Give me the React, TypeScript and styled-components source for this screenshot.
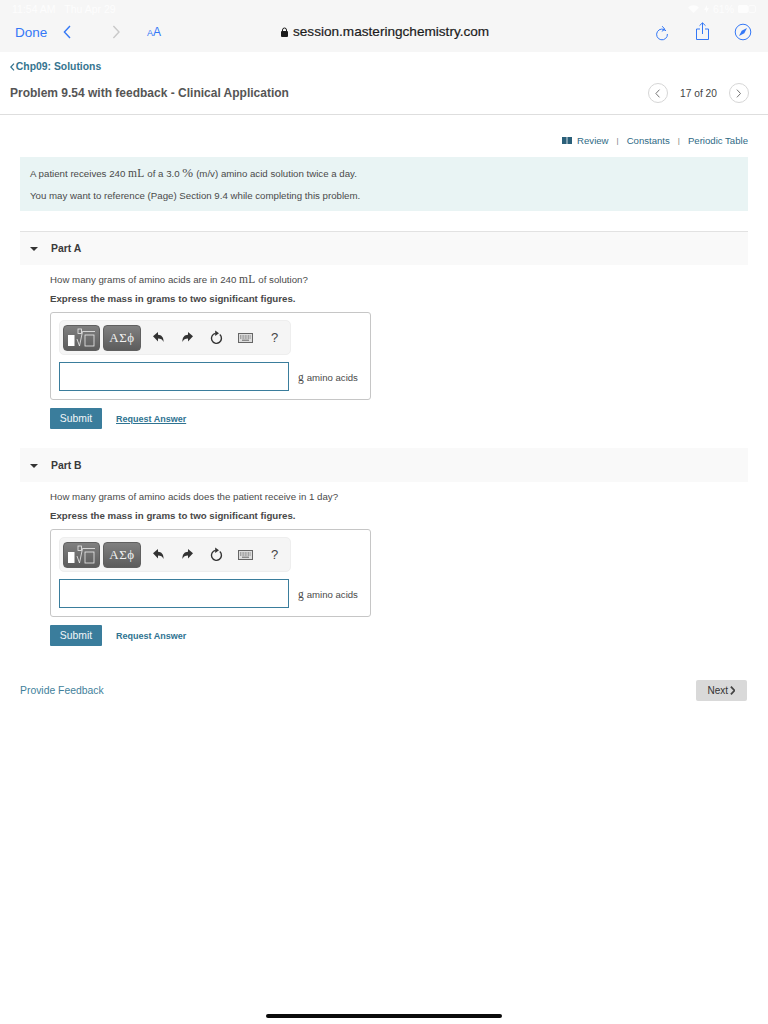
import styled, { createGlobalStyle } from "styled-components";

const Global = createGlobalStyle`
  html, body { margin: 0; padding: 0; background: #fff; }
  body { font-family: "Liberation Sans", Arial, sans-serif; color: #333; }
`;

const Page = styled.div`
  width: 768px;
  height: 1024px;
  position: relative;
  overflow: hidden;
  background: #fff;
`;

const BrowserBar = styled.header`
  height: 52px;
  background: #f6f6f6;
  position: relative;
  box-sizing: border-box;
  padding: 0 16px 0 15px;
`;

const StatusLeft = styled.div`
  position: absolute;
  left: 12px;
  top: 3px;
  font-size: 10.5px;
  line-height: 12px;
  color: #fdfdfd;
`;

const StatusRight = styled.div`
  position: absolute;
  right: 11px;
  top: 3px;
  display: flex;
  align-items: center;
  gap: 4px;
  font-size: 10.5px;
  line-height: 12px;
  color: #fdfdfd;
`;

const BrowserRow = styled.div`
  height: 52px;
  padding-top: 12px;
  box-sizing: border-box;
  display: flex;
  align-items: center;
  color: #3478f6;
`;

const DoneText = styled.span`
  font-size: 13.5px;
  width: 48px;
`;

const NavSlot = styled.span`
  display: flex;
  width: ${(p: { $w: number }) => p.$w}px;
`;

const TextSize = styled.span`
  font-size: 12px;
  width: 100px;
  & small { font-size: 9px; }
`;

const Address = styled.div`
  position: absolute;
  left: 281px;
  top: 24px;
  display: flex;
  align-items: center;
  gap: 5px;
  font-size: 13.6px;
  color: #1c1c1c;
  -webkit-text-stroke: 0.2px #1c1c1c;
`;

const BrowserTools = styled.div`
  position: absolute;
  left: 656px;
  top: 22px;
  display: flex;
  align-items: center;
  gap: 24px;
`;

const TitleArea = styled.div`
  height: 63px;
  box-sizing: border-box;
  border-bottom: 1px solid #dedede;
  padding: 9px 19px 0 10px;
`;

const Crumb = styled.a`
  display: flex;
  align-items: center;
  gap: 1px;
  font-size: 10.4px;
  font-weight: 700;
  color: #35748f;
  line-height: 11px;
`;

const TitleRow = styled.div`
  display: flex;
  align-items: center;
  justify-content: space-between;
  margin-top: 10px;
  height: 22px;
`;

const Title = styled.h1`
  margin: 0;
  font-size: 12px;
  font-weight: 700;
  color: #555;
`;

const Pager = styled.div`
  display: flex;
  align-items: center;
  font-size: 10.2px;
  color: #444;
`;

const PagerButton = styled.span`
  width: 20px;
  height: 20px;
  box-sizing: border-box;
  border: 1px solid #d6d6d6;
  border-radius: 50%;
  display: flex;
  align-items: center;
  justify-content: center;
`;

const PagerText = styled.span`
  width: 61px;
  text-align: center;
`;

const Content = styled.main`
  padding: 0 20px;
`;

const Links = styled.div`
  display: flex;
  justify-content: flex-end;
  align-items: center;
  height: 42px;
  box-sizing: border-box;
  padding-top: 8px;
  font-size: 9.6px;
  color: #2f6a85;
`;

const Separator = styled.span`
  margin: 0 8px;
  color: #777;
  font-size: 8px;
`;

const Intro = styled.section`
  height: 54px;
  box-sizing: border-box;
  background: #e9f4f4;
  padding: 10px 10px 0;
  font-size: 9.7px;
  color: #4a4a4a;
`;

const IntroLine = styled.p`
  margin: 0 0 11px;
  line-height: 11px;
`;

const Unit = styled.span`
  font-family: "Liberation Serif", "Times New Roman", serif;
  font-size: 11.5px;
  letter-spacing: 0.3px;
`;

const Percent = styled(Unit)`
  font-size: 13px;
  line-height: 11px;
`;

const PartHeader = styled.div`
  margin-top: ${(p: { $top: number }) => p.$top}px;
  height: 34px;
  box-sizing: border-box;
  background: #f9f9f9;
  display: flex;
  align-items: center;
  padding-left: 10px;
  font-size: 10.4px;
  font-weight: 700;
  color: #3a3a3a;
`;

const PartHeaderTop = styled(PartHeader)`
  border-top: 1px solid #e2e2e2;
`;

const Caret = styled.span`
  width: 0;
  height: 0;
  border-left: 4px solid transparent;
  border-right: 4px solid transparent;
  border-top: 4px solid #333;
  margin-right: 13px;
  margin-top: 1px;
`;

const PartBody = styled.div`
  padding: 8px 0 0 30px;
`;

const Question = styled.p`
  margin: 0;
  font-size: 9.7px;
  line-height: 11px;
  padding-top: 1px;
  color: #4a4a4a;
`;

const Instruction = styled.p`
  margin: 8px 0 0;
  font-size: 9.7px;
  line-height: 11px;
  font-weight: 700;
  color: #484848;
`;

const AnswerBox = styled.div`
  margin-top: 8px;
  width: 321px;
  height: 88px;
  box-sizing: border-box;
  border: 1px solid #c6c6c6;
  border-radius: 3px;
  padding: 7px 8px 0;
`;

const Toolbar = styled.div`
  width: 232px;
  height: 35px;
  box-sizing: border-box;
  background: #f5f5f5;
  border: 1px solid #eeeeee;
  border-radius: 5px;
  display: flex;
  align-items: center;
  padding-left: 3px;
`;

const MathButton = styled.span`
  width: ${(p: { $w: number }) => p.$w}px;
  height: 26px;
  box-sizing: border-box;
  margin-right: 3px;
  border-radius: 4px;
  border: 1px solid #606060;
  background: linear-gradient(#808080, #5c5c5c);
  color: #f2f2f2;
  font-family: "Liberation Serif", serif;
  font-size: 13px;
  letter-spacing: 0.5px;
  display: flex;
  align-items: center;
  justify-content: center;
`;

const ToolIcon = styled.span`
  width: 29px;
  display: flex;
  justify-content: center;
  align-items: center;
  color: #444;
  font-size: 13px;
`;

const AnswerRow = styled.div`
  display: flex;
  align-items: center;
  margin-top: 7px;
`;

const AnswerInput = styled.input`
  width: 230px;
  height: 29px;
  box-sizing: border-box;
  border: 1px solid #3a7d9c;
  border-radius: 0;
  padding: 0;
  outline: none;
  background: #fff;
`;

const AnswerUnit = styled.span`
  margin-left: 9px;
  font-size: 9.6px;
  color: #4a4a4a;
`;

const Actions = styled.div`
  display: flex;
  align-items: center;
  margin-top: 8px;
`;

const SubmitButton = styled.button`
  width: 52px;
  height: 21px;
  border: 0;
  border-radius: 1px;
  padding: 0;
  background: #3a7d9c;
  color: #f1f6f8;
  font: 10.4px "Liberation Sans", Arial, sans-serif;
`;

const RequestLink = styled.a`
  margin-left: 14px;
  font-size: 9px;
  font-weight: 700;
  color: #2f7391;
  text-decoration: ${(p: { $line: boolean }) => (p.$line ? "underline" : "none")};
`;

const Footer = styled.footer`
  margin-top: 34px;
  display: flex;
  justify-content: space-between;
  align-items: center;
  padding-right: 1px;
`;

const FeedbackLink = styled.a`
  font-size: 10.4px;
  color: #3f7f9b;
`;

const NextButton = styled.span`
  width: 51px;
  height: 21px;
  border-radius: 2px;
  background: #d9d9d9;
  color: #333;
  font-size: 10px;
  display: flex;
  align-items: center;
  justify-content: center;
  gap: 2px;
`;

const HomeIndicator = styled.div`
  position: absolute;
  left: 266px;
  bottom: 6px;
  width: 236px;
  height: 4px;
  border-radius: 2px;
  background: #0a0a0a;
`;

const Chevron = ({ dir, size, color, width }: { dir: "l" | "r"; size: number; color: string; width: number }) => (
  <svg width={size * 0.6} height={size} viewBox="0 0 6 10" fill="none" stroke={color} strokeWidth={width}>
    <path d={dir === "l" ? "M5 .7 1 5l4 4.3" : "M1 .7 5 5 1 9.3"} />
  </svg>
);

const Part = ({ first }: { first: boolean }) => (
  <AnswerBox>
    <Toolbar>
      <MathButton $w={37}>
        <svg width="30" height="20" viewBox="0 0 30 20" fill="none" stroke="#eee" strokeWidth="0.8">
          <rect x="1" y="7" width="6.5" height="11" fill="#fff" stroke="none" />
          <rect x="11" y="1" width="3.5" height="4.5" />
          <path d="M10 11l2.5 7 3-14.5" />
          <path d="M15.5 3.5H28" />
          <rect x="18" y="7" width="9" height="11" />
        </svg>
      </MathButton>
      <MathButton $w={38}>ΑΣϕ</MathButton>
      <ToolIcon>
        <svg width="13" height="13" viewBox="0 0 13 13" fill="#333">
          <path d="M1 5.2 6 1v2.8c3.6.2 5.6 2.4 5.6 7.2-1-2.3-2.8-3.4-5.6-3.4v2.8z" />
        </svg>
      </ToolIcon>
      <ToolIcon>
        <svg width="13" height="13" viewBox="0 0 13 13" fill="#333">
          <path d="M12 5.2 7 1v2.8C3.4 4 1.4 6.2 1.4 11c1-2.3 2.8-3.4 5.6-3.4v2.8z" />
        </svg>
      </ToolIcon>
      <ToolIcon>
        <svg width="13" height="15" viewBox="0 0 13 15" fill="none" stroke="#333" strokeWidth="1.4">
          <path d="M9.8 4.6a5 5 0 1 1-4.3-1.2" />
          <path d="M5.2 .6v5.4L9 3.2z" fill="#333" stroke="none" />
        </svg>
      </ToolIcon>
      <ToolIcon>
        <svg width="15" height="10" viewBox="0 0 15 10">
          <rect x=".5" y=".5" width="14" height="9" fill="#ddd" stroke="#666" />
          <path d="M2 3h11M2 5h11" stroke="#666" strokeDasharray="1 .6" />
          <path d="M4 7.2h7" stroke="#666" />
        </svg>
      </ToolIcon>
      <ToolIcon>?</ToolIcon>
    </Toolbar>
    <AnswerRow>
      <AnswerInput aria-label={first ? "Part A answer" : "Part B answer"} />
      <AnswerUnit>
        <Unit>g</Unit> amino acids
      </AnswerUnit>
    </AnswerRow>
  </AnswerBox>
);

export default function App() {
  return (
    <Page>
      <Global />
      <BrowserBar>
        <StatusLeft>11:54 AM&nbsp;&nbsp;&nbsp;Thu Apr 29</StatusLeft>
        <StatusRight>
          <svg width="11" height="8" viewBox="0 0 11 8" fill="#fdfdfd">
            <path d="M5.5 8 0 2.5a8 8 0 0 1 11 0z" />
          </svg>
          <svg width="6" height="8" viewBox="0 0 6 8" fill="#fdfdfd">
            <path d="M4 0 1 5h2v3l3-5H4z" />
          </svg>
          61%
          <svg width="19" height="8" viewBox="0 0 19 8" fill="#fdfdfd">
            <rect width="10" height="8" rx="1.5" />
            <rect x="10.5" y=".5" width="7" height="7" rx="1.5" fill="none" stroke="#fbfbfb" />
          </svg>
        </StatusRight>
        <BrowserRow>
          <DoneText>Done</DoneText>
          <NavSlot $w={49}>
            <Chevron dir="l" size={14} color="#3478f6" width={1} />
          </NavSlot>
          <NavSlot $w={35}>
            <Chevron dir="r" size={14} color="#c9c9c9" width={1} />
          </NavSlot>
          <TextSize>
            <small>A</small>A
          </TextSize>
        </BrowserRow>
        <Address>
          <svg width="7" height="10" viewBox="0 0 7 10" fill="#1c1c1c">
            <rect y="4" width="7" height="6" rx="1" />
            <path d="M1.5 4.5V3a2 2 0 0 1 4 0v1.5" fill="none" stroke="#1c1c1c" />
          </svg>
          session.masteringchemistry.com
        </Address>
        <BrowserTools>
          <svg width="14" height="18" viewBox="0 0 14 18" fill="none" stroke="#3478f6" strokeWidth="1">
            <path d="M11.4 8a5.4 5.4 0 1 1-1.4-3.2 5.4 5.4 0 0 0-3-1.2" transform="translate(0 3)" />
            <path d="M6.2 3.2 8.8 6.2 5.8 8.4" />
          </svg>
          <svg width="16" height="19" viewBox="0 0 16 19" fill="none" stroke="#3478f6" strokeWidth="1">
            <path d="M6 7H2.5v10.5h12V7H11" />
            <path d="M8.5 12V1M5.5 3.7l3-2.9 3 2.9" />
          </svg>
          <svg width="18" height="18" viewBox="0 0 18 18" fill="none" stroke="#3478f6" strokeWidth="1">
            <circle cx="9" cy="9" r="7.8" />
            <path d="M13 5 10.3 10.3 5 13l2.7-5.3z" fill="#3478f6" stroke="none" />
          </svg>
        </BrowserTools>
      </BrowserBar>

      <TitleArea>
        <Crumb>
          <Chevron dir="l" size={8} color="#35748f" width={1.6} />
          Chp09: Solutions
        </Crumb>
        <TitleRow>
          <Title>Problem 9.54 with feedback - Clinical Application</Title>
          <Pager>
            <PagerButton>
              <Chevron dir="l" size={9} color="#555" width={0.9} />
            </PagerButton>
            <PagerText>17 of 20</PagerText>
            <PagerButton>
              <Chevron dir="r" size={9} color="#555" width={0.9} />
            </PagerButton>
          </Pager>
        </TitleRow>
      </TitleArea>

      <Content>
        <Links>
          <svg width="10" height="7" viewBox="0 0 10 7" fill="#2a5f79" style={{ marginRight: 5 }}>
            <path d="M0 0h4.6v7H0zM5.4 0H10v7H5.4z" />
          </svg>
          Review
          <Separator>|</Separator>
          Constants
          <Separator>|</Separator>
          Periodic Table
        </Links>
        <Intro>
          <IntroLine>
            A patient receives 240 <Unit>mL</Unit> of a 3.0 <Percent>%</Percent> (m/v) amino acid solution twice a day.
          </IntroLine>
          <IntroLine>You may want to reference (Page) Section 9.4 while completing this problem.</IntroLine>
        </Intro>

        <PartHeaderTop $top={20}>
          <Caret />
          Part A
        </PartHeaderTop>
        <PartBody>
          <Question>
            How many grams of amino acids are in 240 <Unit>mL</Unit> of solution?
          </Question>
          <Instruction>Express the mass in grams to two significant figures.</Instruction>
          <Part first />
          <Actions>
            <SubmitButton>Submit</SubmitButton>
            <RequestLink $line>Request Answer</RequestLink>
          </Actions>
        </PartBody>

        <PartHeader $top={19}>
          <Caret />
          Part B
        </PartHeader>
        <PartBody>
          <Question>How many grams of amino acids does the patient receive in 1 day?</Question>
          <Instruction>Express the mass in grams to two significant figures.</Instruction>
          <Part first={false} />
          <Actions>
            <SubmitButton>Submit</SubmitButton>
            <RequestLink $line={false}>Request Answer</RequestLink>
          </Actions>
        </PartBody>

        <Footer>
          <FeedbackLink>Provide Feedback</FeedbackLink>
          <NextButton>
            Next
            <Chevron dir="r" size={9} color="#444" width={2} />
          </NextButton>
        </Footer>
      </Content>
      <HomeIndicator />
    </Page>
  );
}
